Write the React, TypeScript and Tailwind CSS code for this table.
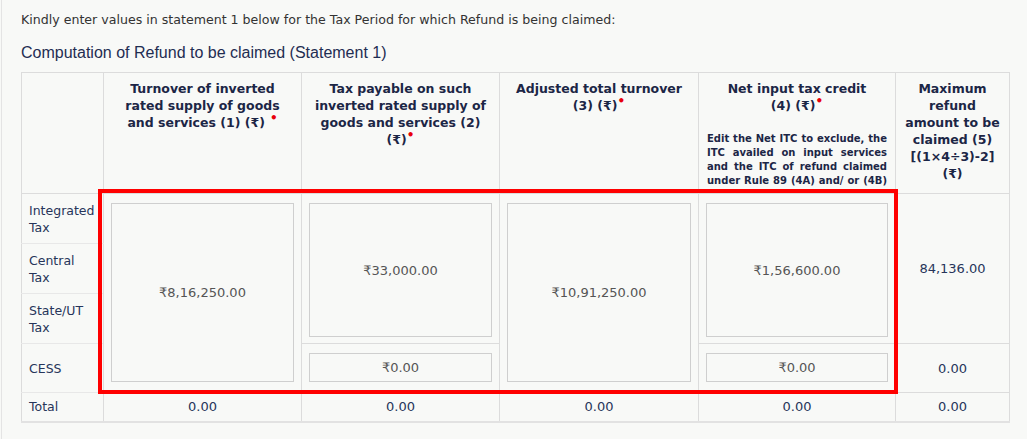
import React from "react";

const Req = ({ gap = false }: { gap?: boolean }) => (
  <span className={`relative -top-[5px] text-[12px] text-[#e8000b] ${gap ? "ml-[5px]" : ""}`}>•</span>
);

const th = "border border-[#dcdcdc] align-top px-[8px] pt-[7px] text-center font-bold";
const label = "border-x border-y border-x-[#dcdcdc] border-y-[#e8e8e8] align-middle pl-[7px] pr-[2px] text-left";
const inputCell = "border border-[#dcdcdc] align-top px-[7px] pt-[9px]";
const plain = "border border-[#dcdcdc] align-middle text-center";

function Box({ h, value }: { h: string; value: string }) {
  return (
    <div className={`flex items-center justify-center border border-[#cfcfcf] text-[13px] text-[#555] ${h}`}>
      {value}
    </div>
  );
}

export default function App() {
  return (
    <div className="min-h-screen bg-[#f8f9f7] font-['DejaVu_Sans',Verdana,sans-serif]">
      <div className="ml-px border-l border-[#e4e4e4] pl-[19px] pt-[11px] min-h-screen">
        <p className="text-[12.6px] leading-[17px] text-[#333]">
          Kindly enter values in statement 1 below for the Tax Period for which Refund is being claimed:
        </p>
        <h3 className="mt-[15px] mb-[9px] font-['Liberation_Sans',Arial,sans-serif] text-[16px] leading-[20px] text-[#1f2d52]">
          Computation of Refund to be claimed (Statement 1)
        </h3>

        <div className="relative w-[988px]">
          <table className="w-[988px] table-fixed border-collapse text-[12.5px] leading-[17px] text-[#27355a]">
            <colgroup>
              <col className="w-[82px]" />
              <col className="w-[198px]" />
              <col className="w-[198px]" />
              <col className="w-[199px]" />
              <col className="w-[197px]" />
              <col className="w-[114px]" />
            </colgroup>
            <thead>
              <tr className="h-[121px] text-[#1c2646]">
                <th className="border border-[#dcdcdc]"></th>
                <th className={th}>
                  Turnover of inverted
                  <br />
                  rated supply of goods
                  <br />
                  and services (1) (₹)
                  <Req gap />
                </th>
                <th className={th}>
                  Tax payable on such
                  <br />
                  inverted rated supply of
                  <br />
                  goods and services (2)
                  <br />
                  (₹)
                  <Req />
                </th>
                <th className={th}>
                  Adjusted total turnover
                  <br />
                  (3) (₹)
                  <Req />
                </th>
                <th className={th}>
                  Net input tax credit
                  <br />
                  (4) (₹)
                  <Req />
                  <div className="mt-[17px] text-left text-[10px] leading-[14px]">
                    <div className="whitespace-nowrap [text-align-last:justify]">Edit the Net ITC to exclude, the</div>
                    <div className="whitespace-nowrap [text-align-last:justify]">ITC availed on input services</div>
                    <div className="whitespace-nowrap [text-align-last:justify]">and the ITC of refund claimed</div>
                    <div className="whitespace-nowrap [text-align-last:justify]">under Rule 89 (4A) and/ or (4B)</div>
                  </div>
                </th>
                <th className={th}>
                  Maximum
                  <br />
                  refund
                  <br />
                  amount to be
                  <br />
                  claimed (5)
                  <br />
                  [(1×4÷3)-2]
                  <br />
                  (₹)
                </th>
              </tr>
            </thead>
            <tbody>
              <tr>
                <td className={`${label} h-[50px]`}>
                  Integrated
                  <br />
                  Tax
                </td>
                <td rowSpan={4} className={inputCell}>
                  <Box h="h-[179px]" value="₹8,16,250.00" />
                </td>
                <td rowSpan={3} className={inputCell}>
                  <Box h="h-[134px]" value="₹33,000.00" />
                </td>
                <td rowSpan={4} className={inputCell}>
                  <Box h="h-[179px]" value="₹10,91,250.00" />
                </td>
                <td rowSpan={3} className={inputCell}>
                  <Box h="h-[134px]" value="₹1,56,600.00" />
                </td>
                <td rowSpan={3} className={`${plain} text-[13px]`}>
                  84,136.00
                </td>
              </tr>
              <tr>
                <td className={`${label} h-[50px]`}>
                  Central
                  <br />
                  Tax
                </td>
              </tr>
              <tr>
                <td className={`${label} h-[50px]`}>
                  State/UT
                  <br />
                  Tax
                </td>
              </tr>
              <tr>
                <td className={`${label} h-[49px]`}>CESS</td>
                <td className={inputCell}>
                  <Box h="h-[29px]" value="₹0.00" />
                </td>
                <td className={inputCell}>
                  <Box h="h-[29px]" value="₹0.00" />
                </td>
                <td className={`${plain} text-[13px]`}>0.00</td>
              </tr>
              <tr className="border-b-2 border-[#e2e2e2]">
                <td className={`${label} h-[29px]`}>Total</td>
                <td className={`${plain} text-[13px]`}>0.00</td>
                <td className={`${plain} text-[13px]`}>0.00</td>
                <td className={`${plain} text-[13px]`}>0.00</td>
                <td className={`${plain} text-[13px]`}>0.00</td>
                <td className={`${plain} text-[13px]`}>0.00</td>
              </tr>
            </tbody>
          </table>
          <div className="pointer-events-none absolute left-[77px] top-[117px] h-[205px] w-[800px] border-4 border-[#ff0000]" />
        </div>
      </div>
    </div>
  );
}
